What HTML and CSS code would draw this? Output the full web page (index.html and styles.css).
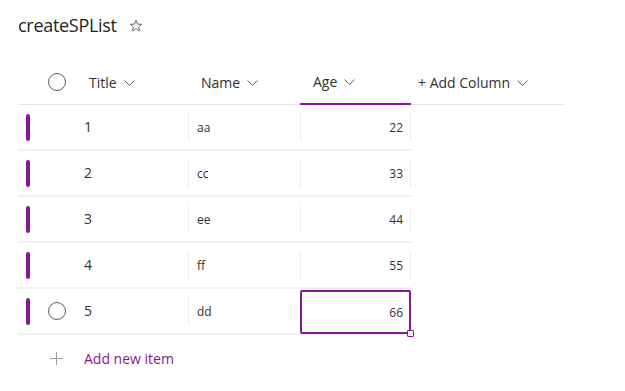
FILE: index.html
```html
<!DOCTYPE html>
<html>
<head>
<meta charset="utf-8">
<link rel="stylesheet" href="styles.css">
</head>
<body>
<div class="page">
  <div class="title-row">
    <h1 class="list-title">createSPList</h1>
    <svg class="star" width="14" height="14" viewBox="0 0 14 14"><path d="M7 1.2 L8.6 5.2 L12.9 5.3 L9.5 7.9 L10.8 12.1 L7 9.6 L3.2 12.1 L4.5 7.9 L1.1 5.3 L5.4 5.2 Z" fill="none" stroke="#605e5c" stroke-width="0.9" stroke-linejoin="round"/></svg>
  </div>

  <div class="list">
    <div class="header">
      <div class="col-check"><span class="circle"></span></div>
      <div class="hcell col-title">Title<svg class="chev" viewBox="0 0 11 6"><path d="M0.5 0.5 L5.5 5.5 L10.5 0.5" fill="none" stroke="#605e5c" stroke-width="1"/></svg></div>
      <div class="hcell col-name">Name<svg class="chev" viewBox="0 0 11 6"><path d="M0.5 0.5 L5.5 5.5 L10.5 0.5" fill="none" stroke="#605e5c" stroke-width="1"/></svg></div>
      <div class="hcell col-age active">Age<svg class="chev" viewBox="0 0 11 6"><path d="M0.5 0.5 L5.5 5.5 L10.5 0.5" fill="none" stroke="#605e5c" stroke-width="1"/></svg></div>
      <div class="hcell col-add">+ Add Column<svg class="chev" viewBox="0 0 11 6"><path d="M0.5 0.5 L5.5 5.5 L10.5 0.5" fill="none" stroke="#605e5c" stroke-width="1"/></svg></div>
    </div>

    <div class="row">
      <div class="col-check"><span class="bar"></span></div>
      <div class="cell col-title">1</div>
      <div class="cell col-name"><span class="inner">aa</span></div>
      <div class="cell col-age"><span class="inner num">22</span></div>
    </div>
    <div class="row">
      <div class="col-check"><span class="bar"></span></div>
      <div class="cell col-title">2</div>
      <div class="cell col-name"><span class="inner">cc</span></div>
      <div class="cell col-age"><span class="inner num">33</span></div>
    </div>
    <div class="row">
      <div class="col-check"><span class="bar"></span></div>
      <div class="cell col-title">3</div>
      <div class="cell col-name"><span class="inner">ee</span></div>
      <div class="cell col-age"><span class="inner num">44</span></div>
    </div>
    <div class="row">
      <div class="col-check"><span class="bar"></span></div>
      <div class="cell col-title">4</div>
      <div class="cell col-name"><span class="inner">ff</span></div>
      <div class="cell col-age"><span class="inner num">55</span></div>
    </div>
    <div class="row">
      <div class="col-check"><span class="bar"></span><span class="circle"></span></div>
      <div class="cell col-title">5</div>
      <div class="cell col-name"><span class="inner">dd</span></div>
      <div class="cell col-age selected"><span class="sel-num">66</span><span class="handle"></span></div>
    </div>

    <div class="add-row">
      <svg class="plus" width="13" height="13" viewBox="0 0 13 13"><path d="M6.5 0 V13 M0 6.5 H13" stroke="#a19f9d" stroke-width="1"/></svg>
      <span class="add-text">Add new item</span>
    </div>
  </div>
</div>
</body>
</html>
```

FILE: styles.css
```css
* { box-sizing: border-box; }
html, body {
  margin: 0;
  padding: 0;
  background: #ffffff;
}
body {
  font-family: "Segoe UI", "Open Sans", "Liberation Sans", sans-serif;
  color: #323130;
}
.page {
  padding: 12px 0 0 18px;
}
.title-row {
  display: flex;
  align-items: center;
  height: 26px;
}
.list-title {
  margin: 0;
  font-size: 18px;
  font-weight: 400;
  color: #252423;
  letter-spacing: -0.3px;
}
.star {
  margin-left: 12px;
  margin-top: 1px;
}
.list {
  margin-top: 22px;
  width: 546px;
}
.header {
  display: flex;
  height: 45px;
  border-bottom: 1px solid #e6e6e6;
  width: 546px;
}
.col-check {
  width: 66px;
  position: relative;
  display: flex;
  align-items: center;
}
.col-title { width: 104px; }
.col-name { width: 112px; }
.col-age { width: 111px; }
.col-add { width: 153px; }

.circle {
  position: absolute;
  left: 30px;
  top: 50%;
  margin-top: -9px;
  width: 18px;
  height: 18px;
  border: 1px solid #605e5c;
  border-radius: 50%;
}
.hcell {
  display: flex;
  align-items: center;
  font-size: 14px;
  color: #323130;
}
.header .col-title { padding-left: 5px; }
.header .col-name { padding-left: 13px; }
.header .col-age { padding-left: 13px; }
.header .col-add { padding-left: 7px; }
.header .active {
  border-bottom: 2px solid #881798;
  margin-bottom: -1px;
}
.chev {
  width: 11px;
  height: 6px;
  margin-left: 7px;
  margin-top: 1px;
}

.row {
  display: flex;
  width: 393px;
  height: 46px;
  border-bottom: 2px solid #f0f0f0;
}
.bar {
  position: absolute;
  left: 8px;
  top: 9px;
  width: 4px;
  height: 27px;
  border-radius: 2px;
  background: #881798;
}
.cell {
  display: flex;
  align-items: center;
  font-size: 14px;
  color: #323130;
}
.row .col-title {
  padding-bottom: 2px;
}
.inner {
  display: flex;
  align-items: center;
  height: 27px;
  width: 100%;
  border-left: 1px solid #edebe9;
  padding-left: 8px;
  font-size: 12px;
  color: #323130;
}
.col-age .inner {
  border-right: 1px solid #edebe9;
}
.num {
  justify-content: flex-end;
  padding-right: 7px;
  padding-left: 0;
}
.selected {
  position: relative;
  border: 2px solid #881798;
  border-radius: 2px;
  height: 44px;
  margin-top: 1px;
  justify-content: flex-end;
  padding-right: 6px;
  font-size: 12px;
}
.sel-num { font-size: 12px; }
.handle {
  position: absolute;
  right: -5px;
  bottom: -5px;
  width: 7px;
  height: 7px;
  background: #ffffff;
  border: 1.5px solid #881798;
  border-radius: 1px;
}
.add-row {
  display: flex;
  align-items: center;
  height: 46px;
}
.plus {
  margin-left: 32px;
}
.add-text {
  margin-left: 21px;
  font-size: 14px;
  color: #881798;
}
```
